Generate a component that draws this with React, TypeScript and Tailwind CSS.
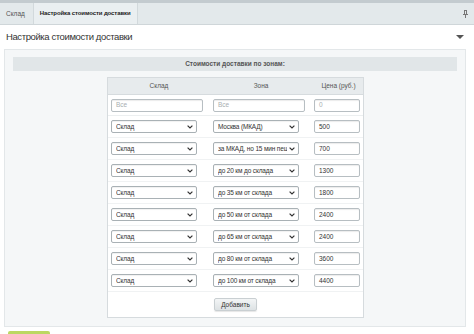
import React from 'react';

const ROWS = [
  { zone: 'Москва (МКАД)', price: '500' },
  { zone: 'за МКАД, но 15 мин пешком', price: '700' },
  { zone: 'до 20 км до склада', price: '1300' },
  { zone: 'до 35 км от склада', price: '1800' },
  { zone: 'до 50 км от склада', price: '2400' },
  { zone: 'до 65 км от склада', price: '2400' },
  { zone: 'до 80 км от склада', price: '3600' },
  { zone: 'до 100 км от склада', price: '4400' },
];

const Chevron: React.FC = () => (
  <svg width="6" height="4" viewBox="0 0 6 4" className="shrink-0">
    <path d="M0.6 0.6 L3 3 L5.4 0.6" fill="none" stroke="#333" strokeWidth="1.2" />
  </svg>
);

const Select: React.FC<{ value: string }> = ({ value }) => (
  <div className="flex items-center h-[13px] w-[86px] border border-[#a9b1b5] rounded-[2px] bg-white pl-[4px] pr-[3px] gap-[2px] shadow-[inset_0_1px_1px_rgba(0,0,0,0.06)]">
    <span className="flex-1 min-w-0 overflow-hidden whitespace-nowrap text-[6.5px] tracking-[-0.15px] leading-[11px] text-[#333]">{value}</span>
    <Chevron />
  </div>
);

const Input: React.FC<{ value: string; muted?: boolean; w: string }> = ({ value, muted, w }) => (
  <div className={`flex items-center h-[13px] ${w} border border-[#b7bec2] rounded-[2px] bg-white px-[4px] shadow-[inset_0_1px_1px_rgba(0,0,0,0.08)]`}>
    <span className={`text-[6.5px] ${muted ? 'text-[#a8aeb1]' : 'text-[#333]'}`}>{value}</span>
  </div>
);

export default function App() {
  return (
    <div className="w-[474px] h-[334px] overflow-hidden bg-white font-['Liberation_Sans',Arial,sans-serif] text-[#333]">
      <div className="h-[3px] bg-[#c3cbcf]" />
      {/* tabs */}
      <div className="flex h-[22px] bg-[#e3e9eb] border-b border-[#cfd6d9] items-stretch">
        <div className="flex items-center px-[6px] text-[6.5px] text-[#555]">Склад</div>
        <div className="flex items-center px-[6px] ml-[2px] bg-[#eaeff1] border-x border-[#d2d9dc] text-[6px] tracking-[-0.1px] font-bold text-[#222]">
          Настройка стоимости доставки
        </div>
        <div className="flex-1" />
        <div className="flex items-center pr-[6px]">
          <svg width="5" height="8" viewBox="0 0 5 8">
            <path d="M1 0.5 H4 M1.5 0.5 V4 M3.5 0.5 V4 M0 4.5 H5 M2.5 4.5 V8" fill="none" stroke="#777" strokeWidth="1" />
          </svg>
        </div>
      </div>
      {/* heading */}
      <div className="flex items-center justify-between h-[23px] px-[6px] mt-[1px]">
        <span className="text-[9.5px] tracking-[-0.4px] text-[#333]">Настройка стоимости доставки</span>
        <svg width="8" height="5" viewBox="0 0 8 5" className="mr-[4px]">
          <path d="M0 0 H8 L4 4 Z" fill="#555" />
        </svg>
      </div>
      {/* panel */}
      <div className="mx-[4px] w-[462px] h-[278px] border border-[#e3e7e9] bg-[#f5f7f8] pt-[7px] px-[8px]">
        <div className="h-[14px] bg-[#e1e6e8] flex items-center justify-center text-[6.5px] font-bold text-[#555]">
          Стоимости доставки по зонам:
        </div>
        <div className="mt-[6px] ml-[94px] w-[257px] border border-[#d6dbde] bg-white">
          <div className="grid grid-cols-[102px_102px_53px] h-[17px] bg-[#e7ebed] items-center text-[6.5px] text-[#555] text-center border-b border-[#d6dbde]">
            <span>Склад</span>
            <span>Зона</span>
            <span>Цена (руб.)</span>
          </div>
          <div className="grid grid-cols-[102px_102px_53px] h-[21px] items-center border-b border-[#eceff0]">
            <div className="pl-[3px]"><Input value="Все" muted w="w-[92px]" /></div>
            <div className="pl-[3px]"><Input value="Все" muted w="w-[92px]" /></div>
            <div className="pl-[2px]"><Input value="0" muted w="w-[46px]" /></div>
          </div>
          {ROWS.map((r, i) => (
            <div key={i} className="grid grid-cols-[102px_102px_53px] h-[22px] items-center border-b border-[#f0f2f3]">
              <div className="pl-[3px]"><Select value="Склад" /></div>
              <div className="pl-[3px]"><Select value={r.zone} /></div>
              <div className="pl-[2px]"><Input value={r.price} w="w-[46px]" /></div>
            </div>
          ))}
          <div className="h-[25px] flex items-center justify-center">
            <div className="h-[13px] px-[6px] flex items-center rounded-[2px] bg-gradient-to-b from-[#f3f5f6] to-[#dde2e4] border border-[#c9cfd2] text-[6.5px] text-[#333] shadow-[0_1px_1px_rgba(0,0,0,0.1)]">
              Добавить
            </div>
          </div>
        </div>
      </div>
      <div className="ml-[8px] mt-[4px] w-[42px] h-[6px] bg-[#bcd862] rounded-t-[2px]" />
    </div>
  );
}
